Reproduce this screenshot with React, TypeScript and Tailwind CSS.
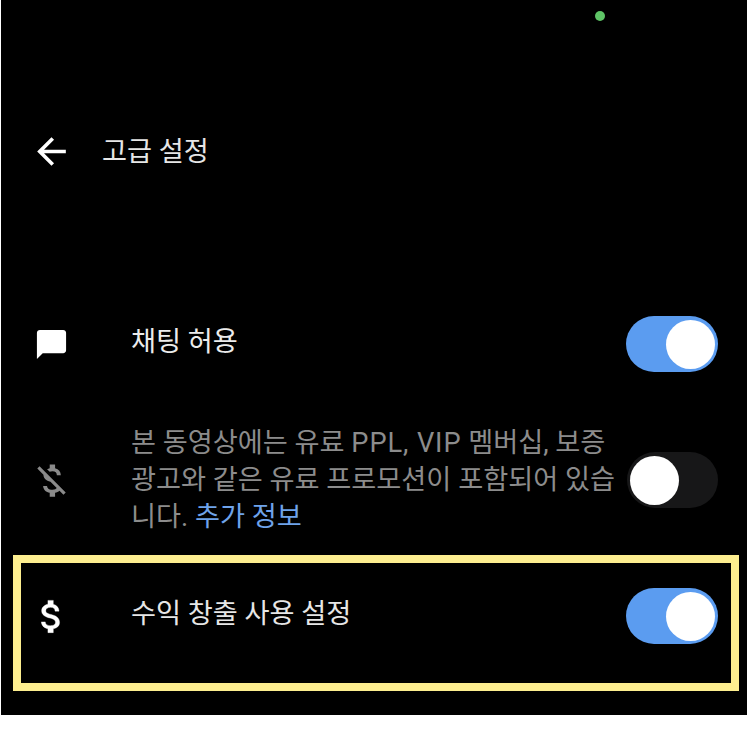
import React from "react";

function Icon({ d, className }: { d: string; className: string }) {
  return (
    <svg viewBox="0 0 24 24" fill="currentColor" className={className}>
      <path d={d} />
    </svg>
  );
}

const ARROW = "M20 11H7.83l5.59-5.59L12 4l-8 8 8 8 1.41-1.41L7.83 13H20v-2z";
const CHAT = "M20 2H4c-1.1 0-2 .9-2 2v18l4-4h14c1.1 0 2-.9 2-2V4c0-1.1-.9-2-2-2z";
const MONEY = "M11.8 10.9c-2.27-.59-3-1.2-3-2.15 0-1.09 1.01-1.85 2.7-1.85 1.78 0 2.44.85 2.5 2.1h2.21c-.07-1.72-1.12-3.3-3.21-3.81V3h-3v2.16c-1.94.42-3.5 1.68-3.5 3.61 0 2.31 1.91 3.46 4.7 4.13 2.5.6 3 1.48 3 2.41 0 .69-.49 1.79-2.7 1.79-2.06 0-2.87-.92-2.98-2.1h-2.2c.12 2.19 1.76 3.42 3.68 3.83V21h3v-2.15c1.95-.37 3.5-1.5 3.5-3.55 0-2.84-2.43-3.81-4.7-4.4z";
const MONEY_OFF = "M12.5 6.9c1.78 0 2.44.85 2.5 2.1h2.21c-.07-1.72-1.12-3.3-3.21-3.81V3h-3v2.16c-.53.12-1.03.3-1.48.54l1.47 1.47c.41-.17.91-.27 1.51-.27zM5.33 4.06L4.06 5.33 7.5 8.77c0 2.08 1.56 3.21 3.91 3.91l3.51 3.51c-.34.48-1.05.91-2.42.91-2.06 0-2.87-.92-2.98-2.1h-2.2c.12 2.19 1.76 3.42 3.68 3.83V21h3v-2.15c.96-.18 1.82-.55 2.45-1.12l2.22 2.22 1.27-1.27L5.33 4.06z";

function Toggle({ on }: { on: boolean }) {
  return (
    <div
      className={
        on
          ? "flex h-[56px] w-[92px] shrink-0 items-center justify-end rounded-full bg-[#5b9cf0] pr-[3px]"
          : "flex h-[56px] w-[91px] shrink-0 items-center justify-start rounded-full bg-[#171718] pl-[3px]"
      }
    >
      <div className="h-[49px] w-[49px] rounded-full bg-white" />
    </div>
  );
}

export default function App() {
  return (
    <div className="h-[739px] w-[748px] bg-white pl-px pr-px font-['Roboto','Noto_Sans_CJK_KR',sans-serif]">
      <div className="flex h-[715px] flex-col bg-black">
        <div className="flex h-[32px] items-center justify-end pr-[142px]">
          <div className="h-[10px] w-[10px] rounded-full bg-[#5ec466]" />
        </div>
        <div className="mt-[75px] flex h-[88px] items-center pl-[29px]">
          <Icon d={ARROW} className="h-[43px] w-[43px] shrink-0 text-white" />
          <span className="ml-[29px] pt-[2px] text-[27.2px] leading-[37px] text-[#e6e6e6]">고급 설정</span>
        </div>
        <div className="mt-[81px] flex h-[136px] items-center justify-between pl-[33px] pr-[29px]">
          <div className="flex items-center">
            <Icon d={CHAT} className="h-[35px] w-[35px] shrink-0 text-white" />
            <span className="ml-[62px] pb-[3px] text-[27.2px] leading-[37px] text-[#ececec]">채팅 허용</span>
          </div>
          <Toggle on />
        </div>
        <div className="flex h-[136px] items-center justify-between pl-[29px] pr-[29px]">
          <div className="flex items-center">
            <Icon d={MONEY_OFF} className="h-[43px] w-[43px] shrink-0 text-[#8a8a8a]" />
            <p className="ml-[58px] w-[490px] text-[27.2px] leading-[37px] text-[#8c8c8c]">
              본 동영상에는 유료 <span className="tracking-[0.9px]">PPL, VIP</span> 멤버십, 보증 광고와 같은 유료 프로모션이 포함되어 있습니다.{" "}
              <span className="text-[#6fa3ea]">추가 정보</span>
            </p>
          </div>
          <div className="-ml-[100px]">
            <Toggle on={false} />
          </div>
        </div>
        <div className="ml-[12px] mr-[8px] mt-[7px] flex h-[136px] items-center justify-between border-[8px] border-[#fdee8f] pb-[14px] pl-[9px] pr-[13px]">
          <div className="flex items-center">
            <Icon d={MONEY} className="h-[43px] w-[43px] shrink-0 text-white [stroke:currentColor] [stroke-width:0.2]" />
            <span className="ml-[58px] pb-[3px] text-[27.2px] leading-[37px] text-[#e6e6e6]">수익 창출 사용 설정</span>
          </div>
          <Toggle on />
        </div>
      </div>
    </div>
  );
}
